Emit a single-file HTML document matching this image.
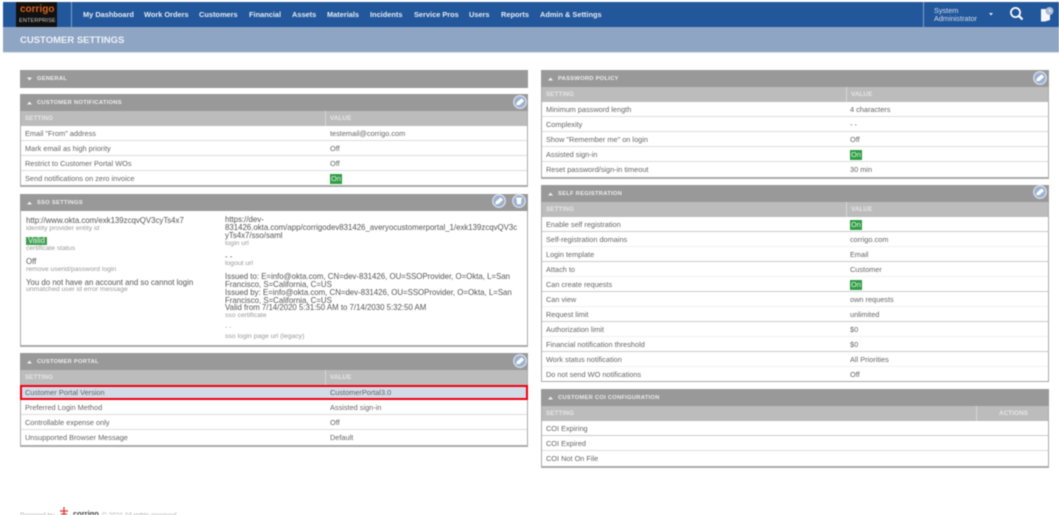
<!DOCTYPE html>
<html><head><meta charset="utf-8"><title>Customer Settings</title>
<style>
html,body{margin:0;padding:0;background:#fff;overflow:hidden}
#p{position:relative;width:1059px;height:515px;overflow:hidden;font-family:"Liberation Sans",sans-serif;filter:blur(.5px);background:#fff}
#p div,#p span.a,#p svg{position:absolute}
.t{position:absolute;white-space:nowrap;line-height:10px;height:10px}
.n{font-weight:bold;font-size:7.4px;color:#e4ebf5;top:10px}
.h{position:absolute;background:#999;height:17px}
.ht{color:#eee;font-weight:bold;font-size:5.8px;letter-spacing:.25px;top:4px;left:17px}
.th{position:absolute;background:#bcbcbc;height:15px}
.tt{color:#e6e6e6;font-size:6.3px;font-weight:bold;letter-spacing:.1px}
.r{position:absolute;background:#fff;height:14px;border-bottom:1px solid #ddd}
.c{font-size:7.35px;color:#666;margin-top:1px}
.on{background:#2e9e45;color:#e8f5e8;padding:0 1px;line-height:10px;display:inline-block}
.s{font-size:7.85px;color:#555;margin-top:1px}
.l{font-size:6.8px;color:#999}
</style></head><body>
<div id="p">
<!-- nav -->
<div style="left:3px;top:2px;width:1056px;height:25px;background:#22579b"></div>
<div style="left:3px;top:27px;width:1056px;height:25px;background:#8fa5c4;border-bottom:1px solid #dde3ec"></div>
<div style="left:16px;top:2px;width:41px;height:25px;background:#111"></div>
<span class="t" style="left:20px;top:4px;font-size:10px;font-weight:bold;color:#d9601a;height:12px;line-height:12px">corrigo</span>
<span class="t" style="left:19px;top:16px;font-size:5.6px;color:#ccc;letter-spacing:.1px">ENTERPRISE</span>
<div style="left:71px;top:2px;width:1px;height:25px;background:#7f9fc8"></div>
<span class="t n" style="left:83px">My Dashboard</span>
<span class="t n" style="left:144px">Work Orders</span>
<span class="t n" style="left:199px">Customers</span>
<span class="t n" style="left:249px">Financial</span>
<span class="t n" style="left:292px">Assets</span>
<span class="t n" style="left:327px">Materials</span>
<span class="t n" style="left:370px">Incidents</span>
<span class="t n" style="left:414px">Service Pros</span>
<span class="t n" style="left:469px">Users</span>
<span class="t n" style="left:501px">Reports</span>
<span class="t n" style="left:540px">Admin &amp; Settings</span>
<div style="left:923px;top:2px;width:1px;height:25px;background:#7f9fc8"></div>
<span class="t" style="left:934px;top:6px;font-size:7.3px;color:#d5deec">System</span>
<span class="t" style="left:934px;top:14px;font-size:7.3px;color:#d5deec">Administrator</span>
<svg style="left:988px;top:12px" width="6" height="4"><path d="M1 1h4L3 3.5z" fill="#e4ebf5"/></svg>
<svg style="left:1008px;top:5px" width="17" height="17" viewBox="0 0 17 17"><circle cx="7.5" cy="7.5" r="4.6" fill="none" stroke="#fff" stroke-width="1.7"/><path d="M11 11l3.5 3.5" stroke="#fff" stroke-width="2.2"/></svg>
<svg style="left:1038px;top:5px" width="18" height="17" viewBox="0 0 18 17"><path d="M3 4h7l2 2v9l-5 1.5H3z" fill="#f4f6fa"/><circle cx="11.5" cy="6" r="4" fill="#a9bcd6"/><path d="M11.5 4v2.2h2" stroke="#fff" fill="none" stroke-width=".7"/></svg>
<span class="t" style="left:20px;top:36px;font-size:9.5px;font-weight:bold;color:#eef2f8">CUSTOMER SETTINGS</span>

<!-- General -->
<div class="h" style="left:20px;top:70px;width:508px;height:18px"><span class="t ht">GENERAL</span>
<svg style="left:6px;top:7px" width="7" height="4"><path d="M1 .5h5L3.5 3.5z" fill="#eee"/></svg></div>

<!-- Notifications -->
<div style="left:20px;top:94px;width:506px;height:90px;border:1px solid #aaa;border-bottom:2px solid #aaa;background:#fff"></div>
<div class="h" style="left:20px;top:94px;width:508px"><span class="t ht">CUSTOMER NOTIFICATIONS</span>
<svg style="left:6px;top:7px" width="7" height="4"><path d="M1 3.5h5L3.5 .5z" fill="#eee"/></svg></div>
<div class="th" style="left:21px;top:111px;width:506px"><span class="t tt" style="left:4px;top:3px">SETTING</span><span class="t tt" style="left:309px;top:3px">VALUE</span></div>
<div style="left:325px;top:111px;width:1px;height:15px;background:#d5d5d5"></div>
<div class="r" style="left:21px;top:126px;width:506px"><span class="t c" style="left:4px;top:2px">Email "From" address</span><span class="t c" style="left:309px;top:2px">testemail@corrigo.com</span></div>
<div class="r" style="left:21px;top:141px;width:506px"><span class="t c" style="left:4px;top:2px">Mark email as high priority</span><span class="t c" style="left:309px;top:2px">Off</span></div>
<div class="r" style="left:21px;top:156px;width:506px"><span class="t c" style="left:4px;top:2px">Restrict to Customer Portal WOs</span><span class="t c" style="left:309px;top:2px">Off</span></div>
<div class="r" style="left:21px;top:171px;width:506px;border:0"><span class="t c" style="left:4px;top:2px">Send notifications on zero invoice</span><span class="t c" style="left:309px;top:2px"><span class="on">On</span></span></div>

<!-- SSO -->
<div style="left:20px;top:194px;width:506px;height:150px;border:1px solid #aaa;border-bottom:2px solid #aaa;background:#fff"></div>
<div class="h" style="left:20px;top:194px;width:508px"><span class="t ht">SSO SETTINGS</span>
<svg style="left:6px;top:7px" width="7" height="4"><path d="M1 3.5h5L3.5 .5z" fill="#eee"/></svg></div>
<span class="t s" style="left:26px;top:215px">http://www.okta.com/exk139zcqvQV3cyTs4x7</span>
<span class="t l" style="left:26px;top:224px">identity provider entity id</span>
<span class="t s" style="left:26px;top:235px"><span style="background:#3c9f50;color:#eef7ee;display:inline-block;line-height:8px;padding:0 2px;">Valid</span></span>
<span class="t l" style="left:26px;top:244px">certificate status</span>
<span class="t s" style="left:26px;top:256px">Off</span>
<span class="t l" style="left:26px;top:265px">remove userid/password login</span>
<span class="t s" style="left:26px;top:277px">You do not have an account and so cannot login</span>
<span class="t l" style="left:26px;top:285px">unmatched user id error message</span>

<span class="t s" style="left:225px;top:214px">https://dev-</span>
<span class="t s" style="left:225px;top:222px">831426.okta.com/app/corrigodev831426_averyocustomerportal_1/exk139zcqvQV3c</span>
<span class="t s" style="left:225px;top:230px">yTs4x7/sso/saml</span>
<span class="t l" style="left:225px;top:239px">login url</span>
<span class="t s" style="left:225px;top:251px">- -</span>
<span class="t l" style="left:225px;top:259px">logout url</span>
<span class="t s" style="left:225px;top:271px">Issued to: E=info@okta.com, CN=dev-831426, OU=SSOProvider, O=Okta, L=San</span>
<span class="t s" style="left:225px;top:279px">Francisco, S=California, C=US</span>
<span class="t s" style="left:225px;top:287px">Issued by: E=info@okta.com, CN=dev-831426, OU=SSOProvider, O=Okta, L=San</span>
<span class="t s" style="left:225px;top:295px">Francisco, S=California, C=US</span>
<span class="t s" style="left:225px;top:302px">Valid from 7/14/2020 5:31:50 AM to 7/14/2030 5:32:50 AM</span>
<span class="t l" style="left:225px;top:311px">sso certificate</span>
<span class="t l" style="left:225px;top:323px">- -</span>
<span class="t l" style="left:225px;top:332px">sso login page url (legacy)</span>

<!-- Portal -->
<div style="left:20px;top:353px;width:506px;height:91px;border:1px solid #aaa;border-bottom:2px solid #aaa;background:#fff"></div>
<div class="h" style="left:20px;top:353px;width:508px"><span class="t ht">CUSTOMER PORTAL</span>
<svg style="left:6px;top:7px" width="7" height="4"><path d="M1 3.5h5L3.5 .5z" fill="#eee"/></svg></div>
<div class="th" style="left:21px;top:370px;width:506px"><span class="t tt" style="left:4px;top:3px">SETTING</span><span class="t tt" style="left:309px;top:3px">VALUE</span></div>
<div style="left:325px;top:370px;width:1px;height:15px;background:#d5d5d5"></div>
<div class="r" style="left:21px;top:400px;width:506px"><span class="t c" style="left:4px;top:2px">Preferred Login Method</span><span class="t c" style="left:309px;top:2px">Assisted sign-in</span></div>
<div class="r" style="left:21px;top:415px;width:506px"><span class="t c" style="left:4px;top:2px">Controllable expense only</span><span class="t c" style="left:309px;top:2px">Off</span></div>
<div class="r" style="left:21px;top:430px;width:506px;border:0"><span class="t c" style="left:4px;top:2px">Unsupported Browser Message</span><span class="t c" style="left:309px;top:2px">Default</span></div>
<div style="box-sizing:border-box;left:20px;top:385px;width:508px;height:15px;background:#d3dbe7;border:2px solid #ee0010"><span class="t c" style="left:3px;top:0">Customer Portal Version</span><span class="t c" style="left:308px;top:0">CustomerPortal3.0</span></div>

<!-- Password -->
<div style="left:541px;top:70px;width:506px;height:106px;border:1px solid #aaa;border-bottom:2px solid #aaa;background:#fff"></div>
<div class="h" style="left:541px;top:70px;width:508px"><span class="t ht">PASSWORD POLICY</span>
<svg style="left:6px;top:7px" width="7" height="4"><path d="M1 3.5h5L3.5 .5z" fill="#eee"/></svg></div>
<div class="th" style="left:542px;top:87px;width:506px"><span class="t tt" style="left:4px;top:3px">SETTING</span><span class="t tt" style="left:309px;top:3px">VALUE</span></div>
<div style="left:846px;top:87px;width:1px;height:15px;background:#d5d5d5"></div>
<div class="r" style="left:542px;top:102px;width:506px"><span class="t c" style="left:4px;top:2px">Minimum password length</span><span class="t c" style="left:308px;top:2px">4 characters</span></div>
<div class="r" style="left:542px;top:117px;width:506px"><span class="t c" style="left:4px;top:2px">Complexity</span><span class="t c" style="left:308px;top:2px">- -</span></div>
<div class="r" style="left:542px;top:132px;width:506px"><span class="t c" style="left:4px;top:2px">Show "Remember me" on login</span><span class="t c" style="left:308px;top:2px">Off</span></div>
<div class="r" style="left:542px;top:147px;width:506px"><span class="t c" style="left:4px;top:2px">Assisted sign-in</span><span class="t c" style="left:308px;top:2px"><span class="on">On</span></span></div>
<div class="r" style="left:542px;top:162px;width:506px;border:0"><span class="t c" style="left:4px;top:2px">Reset password/sign-in timeout</span><span class="t c" style="left:308px;top:2px">30 min</span></div>

<!-- Self reg -->
<div style="left:541px;top:185px;width:506px;height:194px;border:1px solid #aaa;border-bottom:2px solid #aaa;background:#fff"></div>
<div class="h" style="left:541px;top:185px;width:508px"><span class="t ht">SELF REGISTRATION</span>
<svg style="left:6px;top:7px" width="7" height="4"><path d="M1 3.5h5L3.5 .5z" fill="#eee"/></svg></div>
<div class="th" style="left:542px;top:202px;width:506px"><span class="t tt" style="left:4px;top:3px">SETTING</span><span class="t tt" style="left:309px;top:3px">VALUE</span></div>
<div style="left:846px;top:202px;width:1px;height:15px;background:#d5d5d5"></div>
<div class="r" style="left:542px;top:217px;width:506px;border-color:#ccc"><span class="t c" style="left:4px;top:2px">Enable self registration</span><span class="t c" style="left:308px;top:2px"><span class="on">On</span></span></div>
<div class="r" style="left:542px;top:232px;width:506px;border-color:#f2f2f2"><span class="t c" style="left:4px;top:2px">Self-registration domains</span><span class="t c" style="left:308px;top:2px">corrigo.com</span></div>
<div class="r" style="left:542px;top:247px;width:506px;border-color:#ccc"><span class="t c" style="left:4px;top:2px">Login template</span><span class="t c" style="left:308px;top:2px">Email</span></div>
<div class="r" style="left:542px;top:262px;width:506px;border-color:#f2f2f2"><span class="t c" style="left:4px;top:2px">Attach to</span><span class="t c" style="left:308px;top:2px">Customer</span></div>
<div class="r" style="left:542px;top:277px;width:506px;border-color:#ccc"><span class="t c" style="left:4px;top:2px">Can create requests</span><span class="t c" style="left:308px;top:2px"><span class="on">On</span></span></div>
<div class="r" style="left:542px;top:292px;width:506px;border-color:#f2f2f2"><span class="t c" style="left:4px;top:2px">Can view</span><span class="t c" style="left:308px;top:2px">own requests</span></div>
<div class="r" style="left:542px;top:307px;width:506px;border-color:#ccc"><span class="t c" style="left:4px;top:2px">Request limit</span><span class="t c" style="left:308px;top:2px">unlimited</span></div>
<div class="r" style="left:542px;top:322px;width:506px;border-color:#f2f2f2"><span class="t c" style="left:4px;top:2px">Authorization limit</span><span class="t c" style="left:308px;top:2px">$0</span></div>
<div class="r" style="left:542px;top:337px;width:506px;border-color:#ccc"><span class="t c" style="left:4px;top:2px">Financial notification threshold</span><span class="t c" style="left:308px;top:2px">$0</span></div>
<div class="r" style="left:542px;top:352px;width:506px;border-color:#f2f2f2"><span class="t c" style="left:4px;top:2px">Work status notification</span><span class="t c" style="left:308px;top:2px">All Priorities</span></div>
<div class="r" style="left:542px;top:367px;width:506px;border:0"><span class="t c" style="left:4px;top:2px">Do not send WO notifications</span><span class="t c" style="left:308px;top:2px">Off</span></div>

<!-- COI -->
<div style="left:541px;top:389px;width:506px;height:76px;border:1px solid #aaa;border-bottom:2px solid #aaa;background:#fff"></div>
<div class="h" style="left:541px;top:389px;width:508px"><span class="t ht">CUSTOMER COI CONFIGURATION</span>
<svg style="left:6px;top:7px" width="7" height="4"><path d="M1 3.5h5L3.5 .5z" fill="#eee"/></svg></div>
<div class="th" style="left:542px;top:406px;width:506px"><span class="t tt" style="left:4px;top:3px">SETTING</span><span class="t tt" style="left:457px;top:3px">ACTIONS</span></div>
<div style="left:976px;top:406px;width:1px;height:15px;background:#d5d5d5"></div>
<div class="r" style="left:542px;top:421px;width:506px;border-color:#ccc"><span class="t c" style="left:4px;top:2px">COI Expiring</span></div>
<div class="r" style="left:542px;top:436px;width:506px"><span class="t c" style="left:4px;top:2px">COI Expired</span></div>
<div class="r" style="left:542px;top:451px;width:506px;border:0"><span class="t c" style="left:4px;top:2px">COI Not On File</span></div>

<!-- Round buttons -->
<svg style="left:0;top:0" width="1059" height="515">
<defs><g id="e"><circle r="6.3" fill="#9db2d2" stroke="#dfe6f0" stroke-width="1.1"/><path d="M-3.2 2.8l.6-2.2L1.6-3 3.4-1.2 -.8 2.6z" fill="#fff" stroke="#fff" stroke-width=".9"/></g></defs>
<use href="#e" x="520" y="102"/><use href="#e" x="499" y="201"/>
<use href="#e" x="520" y="361"/><use href="#e" x="1040" y="78"/><use href="#e" x="1040" y="192"/>
<g transform="translate(519 201)"><circle r="6.3" fill="#9db2d2" stroke="#dfe6f0" stroke-width="1.1"/><path d="M-3-3.4h6v1h-.6l-.5 5.6h-3.8l-.5-5.6H-3z" fill="#fff"/></g>
</svg>

<!-- Footer -->
<span class="t" style="left:20px;top:511px;font-size:6.5px;color:#aaa">Powered by</span>
<svg style="left:59px;top:507px" width="10" height="8"><path d="M5 0v8M1 4h8M2 7h6" stroke="#d33" stroke-width="1.2"/></svg>
<span class="t" style="left:73px;top:509px;font-size:7.5px;font-weight:bold;color:#444">corrigo</span>
<span class="t" style="left:102px;top:511px;font-size:6.5px;color:#aaa">© 2021 All rights reserved.</span>
</div>
</body></html>
